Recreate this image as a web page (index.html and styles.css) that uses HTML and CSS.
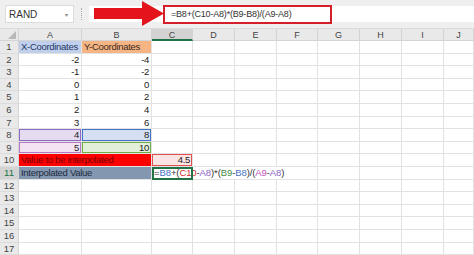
FILE: index.html
```html
<!DOCTYPE html>
<html lang="en">
<head>
    <meta charset="UTF-8">
    <title>Linear Interpolation</title>
    <link rel="stylesheet" href="styles.css">
</head>
<body>
    <!-- formula bar -->
    <div class="toolbar">
        <div class="namebox">
            <span>RAND</span>
            <span class="drop">&#9662;</span>
        </div>
        <div class="dots"></div>
        <div class="formula-area">
            <svg class="arrow" width="72" height="26" viewBox="0 0 72 26">
                <path d="M0 7 H48 V0 L70 12.5 L48 25 V18 H0 Z" fill="#e3141b"/>
            </svg>
            <div class="formula-box">=B8+(C10-A8)*(B9-B8)/(A9-A8)</div>
        </div>
    </div>

    <!-- sheet -->
    <div class="sheet">
        <div class="corner"><span class="tri"></span></div>
        <div class="col-head">A</div>
        <div class="col-head">B</div>
        <div class="col-head selected">C</div>
        <div class="col-head">D</div>
        <div class="col-head">E</div>
        <div class="col-head">F</div>
        <div class="col-head">G</div>
        <div class="col-head">H</div>
        <div class="col-head">I</div>
        <div class="col-head">J</div>

        <div class="row-head">1</div>
        <div class="cell head-x">X-Coordinates</div>
        <div class="cell head-y">Y-Coordinates</div>
        <div class="cell"></div><div class="cell"></div><div class="cell"></div><div class="cell"></div><div class="cell"></div><div class="cell"></div><div class="cell"></div><div class="cell"></div>

        <div class="row-head">2</div>
        <div class="cell num">-2</div><div class="cell num">-4</div>
        <div class="cell"></div><div class="cell"></div><div class="cell"></div><div class="cell"></div><div class="cell"></div><div class="cell"></div><div class="cell"></div><div class="cell"></div>

        <div class="row-head">3</div>
        <div class="cell num">-1</div><div class="cell num">-2</div>
        <div class="cell"></div><div class="cell"></div><div class="cell"></div><div class="cell"></div><div class="cell"></div><div class="cell"></div><div class="cell"></div><div class="cell"></div>

        <div class="row-head">4</div>
        <div class="cell num">0</div><div class="cell num">0</div>
        <div class="cell"></div><div class="cell"></div><div class="cell"></div><div class="cell"></div><div class="cell"></div><div class="cell"></div><div class="cell"></div><div class="cell"></div>

        <div class="row-head">5</div>
        <div class="cell num">1</div><div class="cell num">2</div>
        <div class="cell"></div><div class="cell"></div><div class="cell"></div><div class="cell"></div><div class="cell"></div><div class="cell"></div><div class="cell"></div><div class="cell"></div>

        <div class="row-head">6</div>
        <div class="cell num">2</div><div class="cell num">4</div>
        <div class="cell"></div><div class="cell"></div><div class="cell"></div><div class="cell"></div><div class="cell"></div><div class="cell"></div><div class="cell"></div><div class="cell"></div>

        <div class="row-head">7</div>
        <div class="cell num">3</div><div class="cell num">6</div>
        <div class="cell"></div><div class="cell"></div><div class="cell"></div><div class="cell"></div><div class="cell"></div><div class="cell"></div><div class="cell"></div><div class="cell"></div>

        <div class="row-head">8</div>
        <div class="cell num ref-a8">4</div><div class="cell num ref-b8">8</div>
        <div class="cell"></div><div class="cell"></div><div class="cell"></div><div class="cell"></div><div class="cell"></div><div class="cell"></div><div class="cell"></div><div class="cell"></div>

        <div class="row-head">9</div>
        <div class="cell num ref-a9">5</div><div class="cell num ref-b9">10</div>
        <div class="cell"></div><div class="cell"></div><div class="cell"></div><div class="cell"></div><div class="cell"></div><div class="cell"></div><div class="cell"></div><div class="cell"></div>

        <div class="row-head">10</div>
        <div class="cell span2 label-red">Value to be interpolated</div>
        <div class="cell num ref-c10">4.5</div>
        <div class="cell"></div><div class="cell"></div><div class="cell"></div><div class="cell"></div><div class="cell"></div><div class="cell"></div><div class="cell"></div>

        <div class="row-head active">11</div>
        <div class="cell span2 label-slate">Interpolated Value</div>
        <div class="cell active-cell">
            <span class="edit">=<b class="c-blue">B8</b>+(<b class="c-red">C10</b>-<b class="c-purple">A8</b>)*(<b class="c-green">B9</b>-<b class="c-blue">B8</b>)/(<b class="c-pink">A9</b>-<b class="c-purple">A8</b>)</span>
        </div>
        <div class="cell"></div><div class="cell"></div><div class="cell"></div><div class="cell"></div><div class="cell"></div><div class="cell"></div><div class="cell"></div>

        <div class="row-head">12</div>
        <div class="cell"></div><div class="cell"></div><div class="cell"></div><div class="cell"></div><div class="cell"></div><div class="cell"></div><div class="cell"></div><div class="cell"></div><div class="cell"></div><div class="cell"></div>
        <div class="row-head">13</div>
        <div class="cell"></div><div class="cell"></div><div class="cell"></div><div class="cell"></div><div class="cell"></div><div class="cell"></div><div class="cell"></div><div class="cell"></div><div class="cell"></div><div class="cell"></div>
        <div class="row-head">14</div>
        <div class="cell"></div><div class="cell"></div><div class="cell"></div><div class="cell"></div><div class="cell"></div><div class="cell"></div><div class="cell"></div><div class="cell"></div><div class="cell"></div><div class="cell"></div>
        <div class="row-head">15</div>
        <div class="cell"></div><div class="cell"></div><div class="cell"></div><div class="cell"></div><div class="cell"></div><div class="cell"></div><div class="cell"></div><div class="cell"></div><div class="cell"></div><div class="cell"></div>
        <div class="row-head">16</div>
        <div class="cell"></div><div class="cell"></div><div class="cell"></div><div class="cell"></div><div class="cell"></div><div class="cell"></div><div class="cell"></div><div class="cell"></div><div class="cell"></div><div class="cell"></div>
        <div class="row-head">17</div>
        <div class="cell"></div><div class="cell"></div><div class="cell"></div><div class="cell"></div><div class="cell"></div><div class="cell"></div><div class="cell"></div><div class="cell"></div><div class="cell"></div><div class="cell"></div>
    </div>
</body>
</html>
```

FILE: styles.css
```css
body {
    margin: 0;
    width: 474px;
    height: 255px;
    overflow: hidden;
    background: #fff;
    font-family: "Liberation Sans", Arial, sans-serif;
    font-size: 9.5px;
    color: #222;
}
.toolbar {
    height: 29px;
    background: #efefef;
    display: flex;
    align-items: center;
    box-sizing: border-box;
    border-bottom: 1px solid #dadada;
}
.namebox {
    width: 59px;
    height: 16px;
    margin-left: 5px;
    background: #fff;
    border: 1px solid #dcdcdc;
    display: flex;
    align-items: center;
    justify-content: space-between;
    padding: 0 5px 0 3px;
    color: #333;
    font-size: 10px;
}
.namebox .drop {
    font-size: 6px;
    color: #888;
}
.dots {
    width: 1px;
    height: 12px;
    margin: 0 6px 0 7px;
    border-left: 1px dotted #aaa;
}
.formula-area {
    flex: 1;
    height: 16px;
    background: #fff;
    display: flex;
    align-items: center;
    position: relative;
    padding-left: 74px;
}
.arrow {
    position: absolute;
    left: 5px;
    top: -5px;
}
.formula-box {
    width: 159px;
    height: 15px;
    border: 2px solid #d41f2b;
    padding-left: 6px;
    line-height: 15px;
    color: #333;
    font-size: 9px;
    letter-spacing: -0.2px;
}
.sheet {
    display: grid;
    grid-template-columns: 19px 63px 70px 41px 42px 42px 41px 42px 42px 42px 1fr;
    grid-template-rows: 12px repeat(17, 12.6px);
}
.corner {
    background: #e9e9e9;
    border-right: 1px solid #d4d4d4;
    border-bottom: 1px solid #d4d4d4;
    position: relative;
}
.corner .tri {
    position: absolute;
    right: 2px;
    bottom: 1px;
    border-left: 8px solid transparent;
    border-bottom: 8px solid #b9b9b9;
}
.col-head {
    background: #e9e9e9;
    border-right: 1px solid #d4d4d4;
    border-bottom: 1px solid #d4d4d4;
    text-align: center;
    line-height: 12px;
    color: #444;
    font-size: 9px;
}
.col-head.selected {
    background: #d3d3d3;
    border-bottom: 2px solid #217346;
}
.row-head {
    background: #e9e9e9;
    border-right: 1px solid #d4d4d4;
    border-bottom: 1px solid #dcdcdc;
    text-align: center;
    line-height: 12px;
    color: #444;
    font-size: 9.5px;
}
.row-head.active {
    background: #d3d3d3;
    color: #217346;
}
.cell {
    border-right: 1px solid #e2e2e2;
    border-bottom: 1px solid #e2e2e2;
    line-height: 12px;
    padding: 0 2px;
    white-space: nowrap;
    letter-spacing: -0.3px;
    position: relative;
}
.num {
    text-align: right;
}
.span2 {
    grid-column: span 2;
}
.head-x {
    background: #c0cfec;
    color: #1f3764;
}
.head-y {
    background: #f5b483;
    color: #3c2a1c;
}
.ref-a8 {
    background: #e5dcf1;
    box-shadow: inset 0 0 0 1px #8c6bc4;
}
.ref-b8 {
    background: #d5dff2;
    box-shadow: inset 0 0 0 1px #4472c4;
}
.ref-a9 {
    background: #f4e4f3;
    box-shadow: inset 0 0 0 1px #b679c4;
}
.ref-b9 {
    background: #e2efd9;
    box-shadow: inset 0 0 0 1px #70ad47;
}
.ref-c10 {
    background: #fbe4e4;
    box-shadow: inset 0 0 0 1px #e05050;
}
.label-red {
    background: #ff0000;
    color: #7a0000;
}
.label-slate {
    background: #8497b0;
    color: #1d2a3e;
}
.active-cell {
    z-index: 2;
}
.active-cell::after {
    content: "";
    position: absolute;
    left: 0;
    top: 0;
    width: 41px;
    height: 12.6px;
    box-sizing: border-box;
    border: 2px solid #217346;
    z-index: 3;
}
.edit {
    position: absolute;
    left: 2px;
    top: 0;
    padding-right: 2px;
    background: #fff;
    color: #333;
    letter-spacing: -0.1px;
}
.edit b {
    font-weight: normal;
}
.c-blue { color: #4472c4; }
.c-red { color: #d03030; }
.c-purple { color: #8d64c7; }
.c-green { color: #3f8f3f; }
.c-pink { color: #c250b8; }
```
